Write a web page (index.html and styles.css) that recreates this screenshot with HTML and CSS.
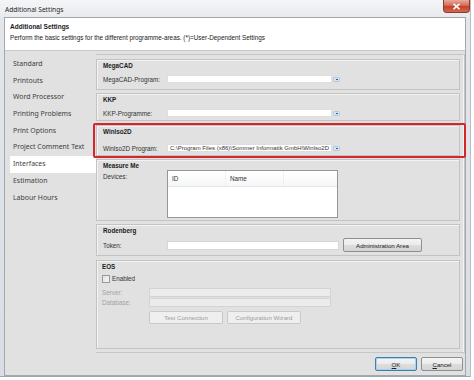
FILE: index.html
```html
<!DOCTYPE html>
<html>
<head>
<meta charset="utf-8">
<link rel="stylesheet" href="styles.css">
</head>
<body>
<div class="window">
  <div class="titlebar">
    <span class="title">Additional Settings</span>
    <div class="close">
      <svg width="9" height="7" viewBox="0 0 9 7"><path d="M1.5 0.8 L7.5 6.2 M7.5 0.8 L1.5 6.2" stroke="#fff" stroke-width="1.6"/></svg>
    </div>
  </div>
  <div class="client">
    <div class="header">
      <div class="h-title">Additional Settings</div>
      <div class="h-desc">Perform the basic settings for the different programme-areas. (*)=User-Dependent Settings</div>
    </div>
    <div class="main">
      <ul class="nav">
        <li>Standard</li>
        <li>Printouts</li>
        <li>Word Processor</li>
        <li>Printing Problems</li>
        <li>Print Options</li>
        <li>Project Comment Text</li>
        <li class="active">Interfaces</li>
        <li>Estimation</li>
        <li>Labour Hours</li>
      </ul>
      <div class="panel-col">
        <div class="panel">
          <div class="group g-mega">
            <div class="g-title">MegaCAD</div>
            <div class="row">
              <span class="label">MegaCAD-Program:</span>
              <div class="combo"><div class="field"></div><div class="dd"></div></div>
            </div>
          </div>
          <div class="group g-kkp">
            <div class="g-title">KKP</div>
            <div class="row">
              <span class="label">KKP-Programme:</span>
              <div class="combo"><div class="field"></div><div class="dd"></div></div>
            </div>
          </div>
          <div class="group g-win">
            <div class="g-title">Winlso2D</div>
            <div class="row">
              <span class="label">Winlso2D Program:</span>
              <div class="combo"><div class="field">C:\Program Files (x86)\Sommer Informatik GmbH\Winlso2D</div><div class="dd"></div></div>
            </div>
          </div>
          <div class="group g-measure">
            <div class="g-title">Measure Me</div>
            <div class="row row-top">
              <span class="label">Devices:</span>
              <div class="list">
                <div class="list-head">
                  <span class="col c-id">ID</span>
                  <span class="col c-name">Name</span>
                  <span class="col c-rest"></span>
                </div>
              </div>
            </div>
          </div>
          <div class="group g-roden">
            <div class="g-title">Rodenberg</div>
            <div class="row">
              <span class="label">Token:</span>
              <div class="input"></div>
              <button class="btn btn-admin">Administration Area</button>
            </div>
          </div>
          <div class="group g-eos">
            <div class="g-title">EOS</div>
            <label class="check"><span class="box"></span>Enabled</label>
            <div class="row row-dis first-dis">
              <span class="label dis">Server:</span>
              <div class="input dis-input"></div>
            </div>
            <div class="row row-dis">
              <span class="label dis">Database:</span>
              <div class="input dis-input"></div>
            </div>
            <div class="eos-btns">
              <button class="btn btn-dis">Test Connection</button>
              <button class="btn btn-dis">Configuration Wizard</button>
            </div>
          </div>
          <div class="highlight"></div>
        </div>
        <div class="footer">
          <button class="btn btn-foot btn-default"><u>O</u>K</button>
          <button class="btn btn-foot"><u>C</u>ancel</button>
        </div>
      </div>
    </div>
  </div>
</div>
</body>
</html>
```

FILE: styles.css
```css
* { box-sizing: border-box; }
html, body { margin: 0; padding: 0; background: #ffffff; }
body { width: 474px; height: 380px; overflow: hidden; font-family: "Liberation Sans", Arial, sans-serif; }

.window {
  width: 471px;
  height: 377px;
  background: linear-gradient(180deg, #eef1f4 0px, #e3e7ec 17px, #d9dee4 100%);
  border-right: 1px solid #b9bec4;
  border-bottom: 1px solid #9fa5ab;
  display: flex;
  flex-direction: column;
}

.titlebar {
  height: 17px;
  display: flex;
  align-items: center;
  justify-content: space-between;
  padding-left: 5px;
  background: linear-gradient(180deg, #f4f5f7, #e8ebee);
}
.title {
  font-family: "Noto Sans", sans-serif;
  font-size: 6.6px;
  color: #1e1e1e;
  margin-top: 1px;
}
.close {
  align-self: flex-start;
  width: 27px;
  height: 13px;
  margin-right: 0;
  border-radius: 0 0 4px 4px;
  background: linear-gradient(180deg, #e9a99c 0%, #d46c5a 45%, #c4412c 55%, #d36a4e 100%);
  border: 1px solid #8b3a30;
  border-top: none;
  display: flex;
  align-items: center;
  justify-content: center;
}

.client {
  margin: 0 4px 0 4px;
  flex: 1;
  border: 1px solid #a3a8ae;
  background: #e1e1e1;
  display: flex;
  flex-direction: column;
}

.header {
  height: 33px;
  background: #ffffff;
  border-bottom: 1px solid #c9c9c9;
  padding: 3px 5px 0 5px;
  color: #1a1a1a;
}
.h-title { font-weight: bold; font-size: 6.5px; line-height: 11px; }
.h-desc { font-size: 6.35px; line-height: 11px; }

.main {
  flex: 1;
  display: flex;
}

.nav {
  list-style: none;
  margin: 0;
  padding: 5px 0 0 5px;
  width: 91px;
  font-family: "Noto Sans", sans-serif;
  font-size: 6.9px;
  color: #404040;
}
.nav li {
  height: 16.7px;
  line-height: 16.7px;
  padding-left: 3px;
}
.nav li.active { background: #ffffff; }

.panel-col {
  flex: 1;
  display: flex;
  flex-direction: column;
  padding: 3px 0 0 0;
}

.panel {
  position: relative;
  height: 299px;
  border: 1px solid #c6c6c6;
  border-left: none;
  box-shadow: inset -1px 0 #f4f4f4;
  padding: 4px 4px 0 0;
  display: flex;
  flex-direction: column;
  gap: 3px;
}

.group {
  border: 1px solid #c3c3c3;
  box-shadow: inset 1px 1px #f3f3f3;
  padding: 1px 0 0 6px;
  font-size: 6.3px;
  color: #2a2a2a;
}
.g-title { font-weight: bold; line-height: 9px; color: #1c1c1c; }
.g-mega { height: 31px; }
.g-kkp { height: 28px; }
.g-win { height: 31px; margin-top: 1px; }
.g-measure { height: 62px; }
.g-roden { height: 32px; }
.g-eos { height: 89px; margin-top: 1px; padding-left: 5px; }

.row { display: flex; align-items: center; height: 10px; margin-top: 4px; }
.g-win .row { margin-top: 7px; }
.g-roden .row { margin-top: 5px; }
.row-top { align-items: flex-start; margin-top: 0; height: auto; }
.row-top .label { margin-top: 3px; line-height: 7px; }
.label { width: 64px; flex: none; color: #333; white-space: nowrap; }

.combo { display: flex; align-items: center; }
.field {
  width: 165px;
  height: 8px;
  background: #ffffff;
  border: 1px solid #dedede;
  font-size: 6px;
  line-height: 7px;
  padding-left: 2px;
  white-space: nowrap;
  overflow: hidden;
  color: #333;
}
.dd {
  width: 7px;
  height: 5px;
  margin-left: 1px;
  border-radius: 1.5px;
  background: #d3e4f5;
  border: 1px solid #adc8e4;
  position: relative;
}
.dd::after {
  content: "";
  position: absolute;
  left: 1.5px; top: 1.5px;
  width: 2px; height: 1px;
  background: #3a5b80;
}

.list {
  width: 171px;
  height: 48px;
  background: #ffffff;
  border: 1px solid #969696;
}
.list-head {
  display: flex;
  height: 16px;
  background: linear-gradient(180deg, #ffffff, #f6f7f8);
  border-bottom: 1px solid #e3e5e7;
}
.col { line-height: 15px; padding-left: 4px; color: #333; }
.c-id { width: 58px; border-right: 1px solid #f0f0f0; }
.c-name { width: 58px; border-right: 1px solid #f0f0f0; }

.input {
  width: 172px;
  height: 9px;
  background: #ffffff;
  border: 1px solid #d6d6d6;
}

.btn {
  font-family: "Liberation Sans", Arial, sans-serif;
  font-size: 6.1px;
  color: #222;
  background: linear-gradient(180deg, #f4f4f4 0%, #ebebeb 50%, #dddddd 51%, #d4d4d4 100%);
  border: 1px solid #8e8f8f;
  border-radius: 2px;
  padding: 0;
  margin: 0;
}
.btn-admin { width: 79px; height: 14px; margin-left: 4px; }

.check {
  display: flex;
  align-items: center;
  height: 9px;
  margin-top: 3px;
  color: #333;
}
.box {
  width: 8px; height: 8px;
  border: 1px solid #9a9a9a;
  background: linear-gradient(135deg, #e2e2e2, #f6f6f6);
  margin-right: 2px;
}
.row-dis { height: 9px; margin-top: 1px; }
.row-dis.first-dis { margin-top: 5px; }
.label.dis { width: 47px; color: #a2a2a2; }
.dis-input { width: 182px; height: 9px; background: #ececec; border: 1px solid #d3d3d3; }
.eos-btns { display: flex; gap: 4px; margin: 4px 0 0 47px; }
.btn-dis {
  width: 74px; height: 13px;
  color: #9c9c9c;
  background: #efefef;
  border: 1px solid #c9c9c9;
}

.highlight {
  position: absolute;
  left: -3px;
  top: 68px;
  width: 373px;
  height: 35px;
  border: 2px solid #d4262b;
  border-radius: 2px;
  pointer-events: none;
}

.footer {
  display: flex;
  justify-content: flex-end;
  gap: 4px;
  padding: 4px 2px 0 0;
}
.btn-foot { width: 42px; height: 14px; }
.btn-default { border-color: #3c7fb1; box-shadow: inset 0 0 0 1px #a6d2ee; }
```
